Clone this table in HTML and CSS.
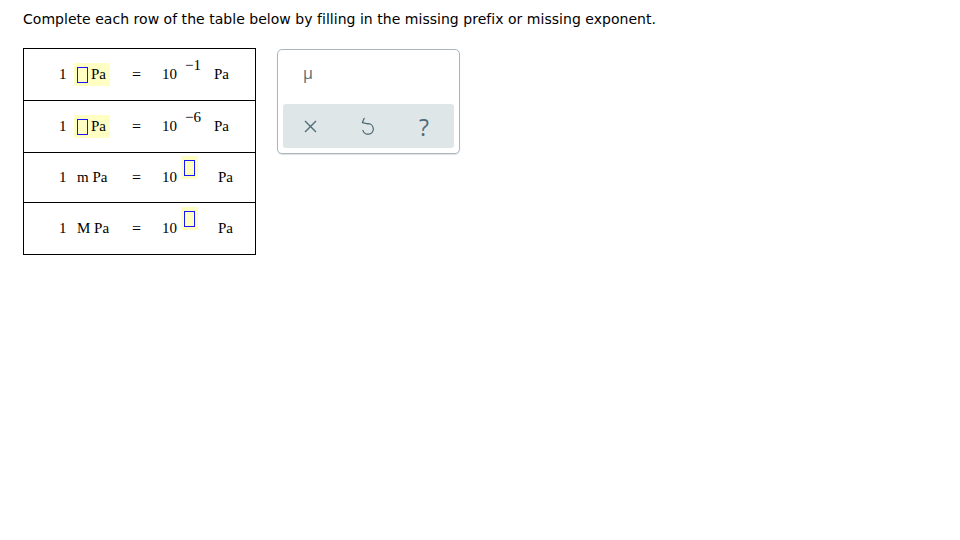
FILE: index.html
```html
<!DOCTYPE html>
<html>
<head>
<meta charset="utf-8">
<link rel="stylesheet" href="styles.css">
</head>
<body>
<p class="intro">Complete each row of the table below by filling in the missing prefix or missing exponent.</p>
<div class="work">
  <div class="table">
    <div class="row">
      <span class="one">1</span>
      <span class="hl pre"><span class="blank"></span><span class="pa">Pa</span></span>
      <span class="eq">=</span>
      <span class="ten">10</span>
      <span class="sup">−1</span>
      <span class="unit">Pa</span>
    </div>
    <div class="row">
      <span class="one">1</span>
      <span class="hl pre"><span class="blank"></span><span class="pa">Pa</span></span>
      <span class="eq">=</span>
      <span class="ten">10</span>
      <span class="sup">−6</span>
      <span class="unit">Pa</span>
    </div>
    <div class="row short">
      <span class="one">1</span>
      <span class="pfx">m Pa</span>
      <span class="eq">=</span>
      <span class="ten">10</span>
      <span class="supbox"><span class="hl exp"><span class="blank"></span></span></span>
      <span class="unit">Pa</span>
    </div>
    <div class="row last">
      <span class="one">1</span>
      <span class="pfx">M Pa</span>
      <span class="eq">=</span>
      <span class="ten">10</span>
      <span class="supbox"><span class="hl exp"><span class="blank"></span></span></span>
      <span class="unit">Pa</span>
    </div>
  </div>
  <div class="palette">
    <div class="keys"><span class="mu">μ</span></div>
    <div class="tools">
      <svg class="ico" width="13" height="13" viewBox="0 0 13 13"><path d="M1 1L12 12M12 1L1 12" stroke="#4e6d77" stroke-width="1.4" fill="none"/></svg>
      <svg class="ico undo" width="14" height="18" viewBox="0 0 14 18"><path d="M3.2 1.3L1.4 5.6L6.8 6.9M6.8 6.6A5.3 5.3 0 1 1 1.9 13.4" stroke="#4e6d77" stroke-width="1.3" fill="none" stroke-linecap="round" stroke-linejoin="round"/></svg>
      <span class="q">?</span>
    </div>
  </div>
</div>
</body>
</html>
```
FILE: styles.css
```css
html, body { margin: 0; padding: 0; background: #fff; }
body { font-family: "DejaVu Sans", Verdana, sans-serif; }
.intro {
  margin: 0;
  padding: 11px 0 0 23px;
  font-size: 14px;
  line-height: 17px;
  color: #000;
  letter-spacing: 0.03px;
}
.work {
  display: flex;
  align-items: flex-start;
  margin-top: 20px;
  padding-left: 23px;
}
.table {
  width: 231px;
  border: 1px solid #000;
  font-family: "Liberation Serif", "Times New Roman", serif;
  font-size: 15px;
  color: #000;
}
.row {
  display: flex;
  align-items: center;
  height: 51px;
  border-bottom: 1px solid #000;
  padding-left: 35px;
  line-height: 17px;
}
.row.short { height: 49px; }
.row.last { border-bottom: none; }
.one { width: 15px; }
.hl { background: #ffffc4; display: inline-flex; align-items: center; }
.pre { height: 23px; width: 36px; padding-left: 3px; box-sizing: border-box; }
.blank {
  display: inline-block;
  width: 11px;
  height: 16px;
  box-sizing: border-box;
  border: 1px solid #1515ff;
}
.pa { margin-left: 3px; }
.pfx { width: 36px; padding-left: 3px; box-sizing: border-box; }
.eq { margin-left: 22px; width: 30px; font-size: 16px; }
.ten { width: 23px; }
.sup { width: 29px; position: relative; top: -9px; }
.supbox { width: 33px; display: inline-flex; }
.exp { height: 23px; width: 17px; justify-content: center; position: relative; top: -10px; margin-left: -4px; }
.palette {
  margin-left: 21px;
  margin-top: 1px;
  width: 183px;
  height: 105px;
  box-sizing: border-box;
  border: 1px solid #a9b7bd;
  border-radius: 5px;
  box-shadow: 0 1px 1px rgba(0,0,0,0.12);
  padding: 0 5px 5px 5px;
  display: flex;
  flex-direction: column;
}
.keys {
  height: 54px;
  display: flex;
  align-items: center;
  padding-left: 20px;
}
.mu {
  font-family: "Open Sans", "DejaVu Sans", sans-serif;
  font-size: 16px;
  line-height: 16px;
  color: #4e6d77;
  position: relative;
  top: -4px;
}
.tools {
  background: #dfe6e8;
  border-radius: 3px;
  height: 44px;
  display: flex;
  align-items: center;
  padding-left: 21px;
  gap: 44px;
}
.ico { display: block; }
.q {
  font-family: "Open Sans", "DejaVu Sans", sans-serif;
  font-size: 23px;
  color: #4e6d77;
  line-height: 20px;
  position: relative;
  top: 1px;
}
```
